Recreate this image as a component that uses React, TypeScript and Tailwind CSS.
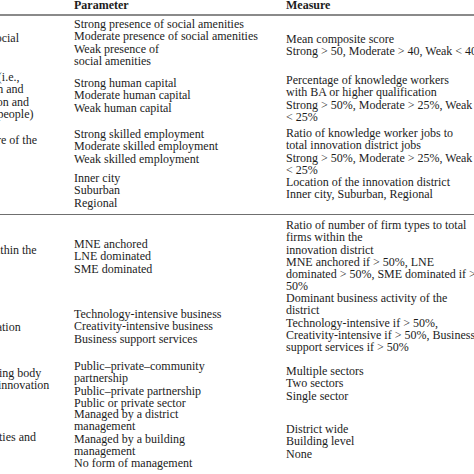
type Frag = { text: string; box: string };

type Row = {
  h: string;
  leftPad: string;
  paramPad: string;
  measurePad: string;
  left: Frag[];
  param: string[];
  measure: string[];
};

const rowsTop: Row[] = [
  {
    h: 'h-[54.5px]',
    leftPad: 'pt-[16.5px]',
    paramPad: 'pt-[2.5px]',
    measurePad: 'pt-[17.5px]',
    left: [{ text: 'Presence of social', box: 'w-[19px]' }],
    param: [
      'Strong presence of social amenities',
      'Moderate presence of social amenities',
      'Weak presence of',
      'social amenities',
    ],
    measure: ['Mean composite score', 'Strong > 50, Moderate > 40, Weak < 40'],
  },
  {
    h: 'h-[56px]',
    leftPad: 'pt-[1px]',
    paramPad: 'pt-[7px]',
    measurePad: 'pt-[4px]',
    left: [
      { text: 'capital (i.e.,', box: 'w-[19.5px]' },
      { text: 'population and', box: 'w-[23.5px]' },
      { text: 'education and', box: 'w-[29px]' },
      { text: 'skilled people)', box: 'w-[33.5px]' },
    ],
    param: ['Strong human capital', 'Moderate human capital', 'Weak human capital'],
    measure: [
      'Percentage of knowledge workers',
      'with BA or higher qualification',
      'Strong > 50%, Moderate > 25%, Weak',
      '< 25%',
    ],
  },
  {
    h: 'h-[45px]',
    leftPad: 'pt-[8px]',
    paramPad: 'pt-[2px]',
    measurePad: 'pt-[1px]',
    left: [{ text: 'nature of the', box: 'w-[37px]' }],
    param: ['Strong skilled employment', 'Moderate skilled employment', 'Weak skilled employment'],
    measure: [
      'Ratio of knowledge worker jobs to',
      'total innovation district jobs',
      'Strong > 50%, Moderate > 25%, Weak',
      '< 25%',
    ],
  },
  {
    h: 'h-[42.5px]',
    leftPad: 'pt-0',
    paramPad: 'pt-[1px]',
    measurePad: 'pt-[5px]',
    left: [],
    param: ['Inner city', 'Suburban', 'Regional'],
    measure: ['Location of the innovation district', 'Inner city, Suburban, Regional'],
  },
];

const rowsBottom: Row[] = [
  {
    h: 'h-[75px]',
    leftPad: 'pt-[29px]',
    paramPad: 'pt-[23px]',
    measurePad: 'pt-[4px]',
    left: [{ text: 'firms within the', box: 'w-[36.7px]' }],
    param: ['MNE anchored', 'LNE dominated', 'SME dominated'],
    measure: [
      'Ratio of number of firm types to total',
      'firms within the',
      'innovation district',
      'MNE anchored if > 50%, LNE',
      'dominated > 50%, SME dominated if >',
      '50%',
    ],
  },
  {
    h: 'h-[68px]',
    leftPad: 'pt-[31px]',
    paramPad: 'pt-[18px]',
    measurePad: 'pt-[2px]',
    left: [{ text: 'specialization', box: 'w-[20.7px]' }],
    param: ['Technology-intensive business', 'Creativity-intensive business', 'Business support services'],
    measure: [
      'Dominant business activity of the',
      'district',
      'Technology-intensive if > 50%,',
      'Creativity-intensive if > 50%, Business',
      'support services if > 50%',
    ],
  },
  {
    h: 'h-[48px]',
    leftPad: 'pt-[9px]',
    paramPad: 'pt-[2px]',
    measurePad: 'pt-[7px]',
    left: [
      { text: 'governing body', box: 'w-[41.3px]' },
      { text: 'of the innovation', box: 'w-[49.3px]' },
    ],
    param: [
      'Public–private–community',
      'partnership',
      'Public–private partnership',
      'Public or private sector',
    ],
    measure: ['Multiple sectors', 'Two sectors', 'Single sector'],
  },
  {
    h: 'h-[68px]',
    leftPad: 'pt-[25px]',
    paramPad: 'pt-[2px]',
    measurePad: 'pt-[17px]',
    left: [{ text: 'facilities and', box: 'w-[36px]' }],
    param: [
      'Managed by a district',
      'management',
      'Managed by a building',
      'management',
      'No form of management',
    ],
    measure: ['District wide', 'Building level', 'None'],
  },
];

const Lines = ({ lines }: { lines: string[] }) => (
  <>
    {lines.map((l, i) => (
      <div key={i} className="whitespace-nowrap">
        {l}
      </div>
    ))}
  </>
);

const TableRow = ({ row }: { row: Row }) => (
  <div className={`grid grid-cols-[74px_212px_1fr] ${row.h}`}>
    <div className={row.leftPad}>
      {row.left.map((f, i) => (
        <div key={i} className={`flex justify-end whitespace-nowrap ${f.box}`}>
          <span className="shrink-0">{f.text}</span>
        </div>
      ))}
    </div>
    <div className={row.paramPad}>
      <Lines lines={row.param} />
    </div>
    <div className={row.measurePad}>
      <Lines lines={row.measure} />
    </div>
  </div>
);

export default function App() {
  return (
    <div
      className="w-[474px] h-[474px] overflow-hidden bg-white text-[12px] leading-[12.3px] text-[#1c1c1c]"
      style={{ fontFamily: '"Liberation Serif", "Times New Roman", serif' }}
    >
      <div className="grid grid-cols-[74px_212px_1fr] h-[14px] font-bold leading-[11px]">
        <div />
        <div>Parameter</div>
        <div>Measure</div>
      </div>
      <div className="h-[1.5px] bg-[#8a8a8a]" />
      {rowsTop.map((r, i) => (
        <TableRow key={i} row={r} />
      ))}
      <div className="h-[1.5px] bg-[#6f6f6f]" />
      {rowsBottom.map((r, i) => (
        <TableRow key={i} row={r} />
      ))}
    </div>
  );
}
